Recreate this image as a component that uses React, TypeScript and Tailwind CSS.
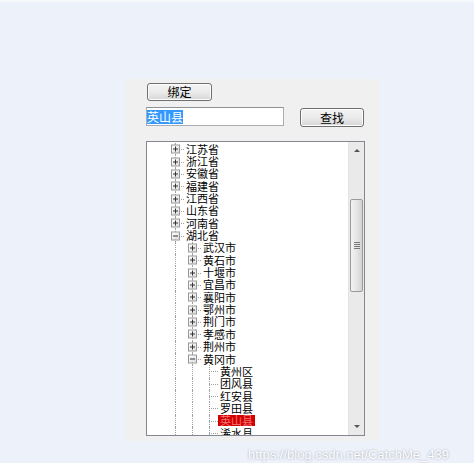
import React from 'react';

type Kind = 'collapsed' | 'expanded' | 'leaf';

interface Node {
  label: string;
  level: number;
  kind: Kind;
  selected?: boolean;
}

const provinces = ['江苏省', '浙江省', '安徽省', '福建省', '江西省', '山东省', '河南省'];
const cities = ['武汉市', '黄石市', '十堰市', '宜昌市', '襄阳市', '鄂州市', '荆门市', '孝感市', '荆州市'];
const counties = ['黄州区', '团风县', '红安县', '罗田县', '英山县', '浠水县'];

const nodes: Node[] = [
  ...provinces.map((label) => ({ label, level: 0, kind: 'collapsed' as Kind })),
  { label: '湖北省', level: 0, kind: 'expanded' },
  ...cities.map((label) => ({ label, level: 1, kind: 'collapsed' as Kind })),
  { label: '黄冈市', level: 1, kind: 'expanded' },
  ...counties.map((label) => ({ label, level: 2, kind: 'leaf' as Kind, selected: label === '英山县' })),
];

const font = { fontFamily: '"Noto Sans CJK SC", "Liberation Sans", sans-serif' };

const Expander: React.FC<{ open: boolean }> = ({ open }) => (
  <div className="absolute left-[4px] top-1/2 -translate-y-1/2 w-[9px] h-[9px] border border-[#979797] bg-gradient-to-br from-white to-[#dcdcdc] flex items-center justify-center">
    <div className="relative w-[5px] h-[5px]">
      <div className="absolute left-0 right-0 top-[2px] h-px bg-[#333]" />
      {!open && <div className="absolute top-0 bottom-0 left-[2px] w-px bg-[#333]" />}
    </div>
  </div>
);

const TreeRow: React.FC<{ node: Node }> = ({ node }) => {
  const cells = [];
  for (let c = 0; c <= node.level; c++) {
    const own = c === node.level;
    cells.push(
      <div key={c} className="relative w-[17px] shrink-0">
        <div className="absolute left-[8px] top-0 bottom-0 border-l border-dotted border-[#a0a0a0]" />
        {own && <div className="absolute left-[8px] right-0 top-1/2 border-t border-dotted border-[#a0a0a0]" />}
        {own && node.kind !== 'leaf' && <Expander open={node.kind === 'expanded'} />}
      </div>
    );
  }
  return (
    <div className="flex h-[12.35px] items-center">
      <div className="flex self-stretch">{cells}</div>
      <span
        className={
          'px-[2px] text-[11px] leading-[11px] h-[11px] whitespace-nowrap ' +
          (node.selected ? 'bg-[#d40000] text-[#f07878]' : 'text-black')
        }
      >
        {node.label}
      </span>
    </div>
  );
};

const WinButton: React.FC<{ label: string; className: string }> = ({ label, className }) => (
  <button
    className={
      'shrink-0 rounded-[3px] border border-[#707070] bg-gradient-to-b from-[#f4f4f4] via-[#ebebeb] to-[#d6d6d6] text-[12px] text-black leading-none flex items-center justify-center shadow-[inset_0_0_0_1px_#fcfcfc] ' +
      className
    }
    style={font}
  >
    {label}
  </button>
);

const ScrollBar: React.FC = () => (
  <div className="w-[16px] shrink-0 flex flex-col bg-[#eaeaea] border-l border-[#e3e3e3]">
    <div className="h-[17px] flex items-center justify-center">
      <div className="w-0 h-0 border-l-[3px] border-r-[3px] border-b-[3px] border-l-transparent border-r-transparent border-b-[#555]" />
    </div>
    <div className="flex-1 px-[1px] pt-[40px]">
      <div className="h-[93px] rounded-[2px] border border-[#9a9a9a] bg-gradient-to-r from-[#f3f3f3] via-[#e6e6e6] to-[#d2d2d2] flex flex-col items-center justify-center gap-[1px]">
        <div className="w-[6px] h-px bg-[#777]" />
        <div className="w-[6px] h-px bg-[#777]" />
        <div className="w-[6px] h-px bg-[#777]" />
        <div className="w-[6px] h-px bg-[#777]" />
      </div>
    </div>
    <div className="h-[17px] flex items-center justify-center">
      <div className="w-0 h-0 border-l-[3px] border-r-[3px] border-t-[3px] border-l-transparent border-r-transparent border-t-[#555]" />
    </div>
  </div>
);

export default function App() {
  return (
    <div className="relative w-[474px] h-[467px] bg-[#edf1f9] border-t-[2px] border-t-[#f5f7fb] border-b-[4px] border-b-white overflow-hidden">
      <div className="ml-[126px] mt-[77px] w-[254px] h-[362px] bg-[#f0f0f0] px-[20px] pt-[4px]">
        <WinButton label="绑定" className="ml-px w-[65px] h-[18px]" />
        <div className="mt-[6px] flex items-start">
          <div className="w-[138px] shrink-0 h-[19px] bg-white border border-[#abadb3] border-t-[#8e9196] flex items-center" style={font}>
            <span className="bg-[#3399ff] text-white text-[12px] leading-[14px]">英山县</span>
          </div>
          <WinButton label="查找" className="ml-[16px] mt-px w-[64px] h-[19px]" />
        </div>
        <div className="mt-[14px] w-[219px] h-[295px] bg-white border border-[#828790] flex" style={font}>
          <div className="flex-1 overflow-hidden pt-[1px] pl-[20px]">
            {nodes.map((n) => (
              <TreeRow key={n.label} node={n} />
            ))}
          </div>
          <ScrollBar />
        </div>
      </div>
      <div
        className="absolute left-[248px] top-[443px] text-[13px] text-white whitespace-nowrap [text-shadow:0_0_2px_#8f99a8]"
        style={{ fontFamily: '"Liberation Sans", Arial, sans-serif' }}
      >
        https://blog.csdn.net/CatchMe_439
      </div>
    </div>
  );
}
